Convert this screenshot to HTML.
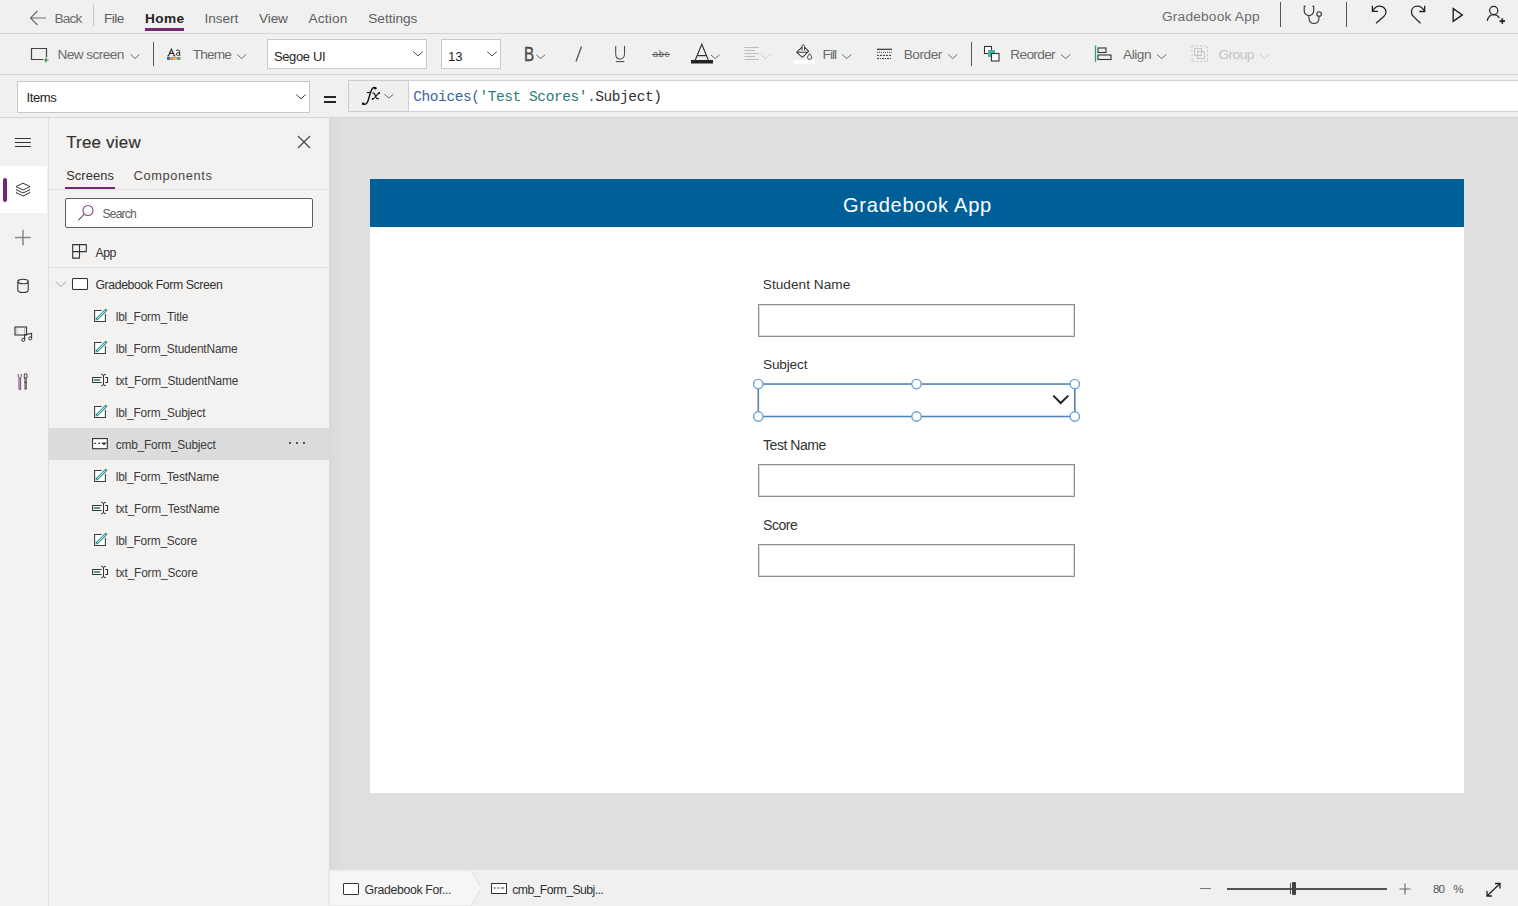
<!DOCTYPE html>
<html><head><meta charset="utf-8"><title>Power Apps</title>
<style>
html,body{margin:0;padding:0;}
body{width:1518px;height:906px;overflow:hidden;position:relative;background:#f0f0f0;font-family:"Liberation Sans",sans-serif;}
.t{position:absolute;white-space:nowrap;line-height:1;}
.r{position:absolute;}
svg.r{overflow:visible;}
</style></head><body>
<div class="r" style="left:0px;top:0px;width:1518px;height:117px;background:#f0f0f0;"></div>
<div class="r" style="left:0px;top:33px;width:1518px;height:1px;background:#d4d4d4;"></div>
<div class="r" style="left:0px;top:74px;width:1518px;height:1px;background:#d4d4d4;"></div>
<div class="r" style="left:0px;top:117px;width:1518px;height:1px;background:#d4d4d4;"></div>
<svg class="r" style="left:29px;top:10px;" width="18" height="16" viewBox="0 0 18 16" fill="none"><path d="M8.5 1 L1.5 8 L8.5 15 M1.5 8 H17" stroke="#6e6e6e" stroke-width="1.2"/></svg>
<div class="t" style="left:54.60px;top:11.87px;font-size:13.66px;letter-spacing:-0.900px;color:#6b6b6b;font-weight:400;font-family:'Liberation Sans', sans-serif;">Back</div>
<div class="r" style="left:93px;top:4px;width:1px;height:22px;background:#c8c8c8;"></div>
<div class="t" style="left:104.00px;top:11.87px;font-size:13.66px;letter-spacing:-0.537px;color:#5e5e5e;font-weight:400;font-family:'Liberation Sans', sans-serif;">File</div>
<div class="t" style="left:145.00px;top:11.87px;font-size:13.66px;letter-spacing:0.348px;color:#252423;font-weight:700;font-family:'Liberation Sans', sans-serif;">Home</div>
<div class="r" style="left:145px;top:28px;width:39px;height:3px;background:#742774;"></div>
<div class="t" style="left:204.50px;top:11.87px;font-size:13.66px;letter-spacing:-0.094px;color:#5e5e5e;font-weight:400;font-family:'Liberation Sans', sans-serif;">Insert</div>
<div class="t" style="left:259.00px;top:11.87px;font-size:13.66px;letter-spacing:-0.134px;color:#5e5e5e;font-weight:400;font-family:'Liberation Sans', sans-serif;">View</div>
<div class="t" style="left:308.60px;top:11.87px;font-size:13.66px;letter-spacing:0.146px;color:#5e5e5e;font-weight:400;font-family:'Liberation Sans', sans-serif;">Action</div>
<div class="t" style="left:368.30px;top:11.87px;font-size:13.66px;letter-spacing:-0.038px;color:#5e5e5e;font-weight:400;font-family:'Liberation Sans', sans-serif;">Settings</div>
<div class="t" style="left:1162.00px;top:9.97px;font-size:13.66px;letter-spacing:0.220px;color:#6b6b6b;font-weight:400;font-family:'Liberation Sans', sans-serif;">Gradebook App</div>
<div class="r" style="left:1280px;top:2px;width:1px;height:25px;background:#555;"></div>
<div class="r" style="left:1346px;top:2px;width:1px;height:25px;background:#555;"></div>
<svg class="r" style="left:1300px;top:0px;" width="26" height="30" viewBox="0 0 26 30" fill="none"><path d="M5.8 6.3 H4.2 V10.8 A4.75 4.75 0 0 0 13.7 10.8 V6.3 H12.2" stroke="#333" stroke-width="1.1" fill="none"/><path d="M8.95 15.55 V18.5 A5 5 0 0 0 18.95 18.5 V16.4" stroke="#333" stroke-width="1.1" fill="none"/><circle cx="19.1" cy="14" r="2.3" stroke="#333" stroke-width="1.1" fill="none"/></svg>
<svg class="r" style="left:1365px;top:0px;" width="28" height="30" viewBox="0 0 28 30" fill="none"><path d="M7.4 5.8 V11.3 H13" stroke="#222" stroke-width="1.3" fill="none"/><path d="M7.8 10.8 C9.5 7.8 12 6.2 14.5 6.2 C18.5 6.2 21 9 21 12 C21 14 20 15.3 19 16.3 L11 23.3" stroke="#222" stroke-width="1.2" fill="none"/></svg>
<svg class="r" style="left:1405px;top:0px;" width="28" height="30" viewBox="0 0 28 30" fill="none"><path d="M19.7 5.8 V11.5 H14.3" stroke="#222" stroke-width="1.3" fill="none"/><path d="M19.2 10.8 C17.5 7.8 15 6.2 12.5 6.2 C8.5 6.2 6.5 9 6.5 12 C6.5 14 7.3 15.3 8.3 16.3 L15.5 23.3" stroke="#222" stroke-width="1.2" fill="none"/></svg>
<svg class="r" style="left:1445px;top:0px;" width="24" height="30" viewBox="0 0 24 30" fill="none"><path d="M8.2 8.6 L17.3 14.9 L8.2 21.3 Z" stroke="#222" stroke-width="1.4" fill="none" stroke-linejoin="miter"/></svg>
<svg class="r" style="left:1480px;top:0px;" width="30" height="30" viewBox="0 0 30 30" fill="none"><circle cx="13.7" cy="10.5" r="4.1" stroke="#222" stroke-width="1.2" fill="none"/><path d="M7.3 20.8 C8 17 10.5 14.6 13.7 14.6 C16 14.6 18 15.8 19.3 18" stroke="#222" stroke-width="1.2" fill="none"/><path d="M22.3 18.3 V23.8 M19.5 21.1 H25" stroke="#222" stroke-width="1.7"/></svg>
<svg class="r" style="left:30px;top:47px;" width="20" height="16" viewBox="0 0 20 16" fill="none"><path d="M13 12.5 H1.5 V1.5 H16.5 V10" stroke="#444" stroke-width="1.2" fill="none"/><path d="M16 10.5 V15.5 M13.5 13 H18.5" stroke="#2e8b3a" stroke-width="1.2"/></svg>
<div class="t" style="left:57.60px;top:47.87px;font-size:13.66px;letter-spacing:-0.604px;color:#6b6b6b;font-weight:400;font-family:'Liberation Sans', sans-serif;">New screen</div>
<svg class="r" style="left:129px;top:53px;" width="12" height="7" viewBox="0 0 12 7" fill="none"><g transform="translate(0.7 0.2)"><path d="M1 1.3 L5.35 5.3 L9.7 1.3" stroke="#6b6b6b" stroke-width="1" fill="none"/></g></svg>
<div class="r" style="left:153px;top:42px;width:1px;height:24px;background:#555;"></div>
<svg class="r" style="left:166px;top:46px;" width="16" height="16" viewBox="0 0 16 16" fill="none"><path d="M2.4 9.7 L5.4 3 L8.4 9.7 M3.6 7.4 H7.2" stroke="#2b2b2b" stroke-width="1.1" fill="none"/><path d="M1.3 9.9 H3.6 M7.2 9.9 H9.5" stroke="#2b2b2b" stroke-width="0.9"/><path d="M10.2 4.6 C10.8 3.7 13.6 3.6 13.6 5.3 V9.3 H14.5 M13.6 6.7 C11.6 6.4 10.3 7 10.3 8.2 C10.3 9.7 12.6 9.8 13.6 8.3" stroke="#2b2b2b" stroke-width="1" fill="none"/><rect x="1" y="11" width="3.2" height="3" fill="#3a72a8"/><rect x="4.4" y="11" width="3.2" height="3" fill="#d9884a"/><rect x="7.8" y="11" width="3.2" height="3" fill="#e8a76a"/><rect x="11.2" y="11" width="3.2" height="3" fill="#5f9c80"/></svg>
<div class="t" style="left:192.80px;top:47.87px;font-size:13.66px;letter-spacing:-0.855px;color:#6b6b6b;font-weight:400;font-family:'Liberation Sans', sans-serif;">Theme</div>
<svg class="r" style="left:236px;top:53px;" width="12" height="7" viewBox="0 0 12 7" fill="none"><g transform="translate(0.2 0.2)"><path d="M1 1.3 L5.45 5.3 L9.9 1.3" stroke="#6b6b6b" stroke-width="1" fill="none"/></g></svg>
<div class="r" style="left:267px;top:39px;width:160px;height:30px;background:#fff;border:1px solid #c8c8c8;box-sizing:border-box;"></div>
<div class="t" style="left:273.90px;top:49.51px;font-size:12.98px;letter-spacing:-0.345px;color:#252423;font-weight:400;font-family:'Liberation Sans', sans-serif;">Segoe UI</div>
<svg class="r" style="left:412px;top:50px;" width="12" height="8" viewBox="0 0 12 8" fill="none"><g transform="translate(0.4 0.3)"><path d="M1 1.3 L5.7 5.6000000000000005 L10.4 1.3" stroke="#444" stroke-width="1" fill="none"/></g></svg>
<div class="r" style="left:441px;top:39px;width:60px;height:30px;background:#fff;border:1px solid #c8c8c8;box-sizing:border-box;"></div>
<div class="t" style="left:448.00px;top:49.50px;font-size:13.00px;letter-spacing:0.000px;color:#252423;font-weight:400;font-family:'Liberation Sans', sans-serif;">13</div>
<svg class="r" style="left:486px;top:50px;" width="12" height="8" viewBox="0 0 12 8" fill="none"><g transform="translate(0.3 0.3)"><path d="M1 1.3 L5.75 5.6000000000000005 L10.5 1.3" stroke="#444" stroke-width="1" fill="none"/></g></svg>
<div class="t" style="left:524.00px;top:44.85px;font-size:19.50px;letter-spacing:0.000px;color:#4a4a4a;font-weight:400;font-family:'Liberation Sans', sans-serif;transform:scaleX(0.78);transform-origin:0 0;-webkit-text-stroke:0.35px #4a4a4a;">B</div>
<svg class="r" style="left:535px;top:53px;" width="11" height="7" viewBox="0 0 11 7" fill="none"><g transform="translate(0.2 0.5)"><path d="M1 1.3 L5.4 5.1000000000000005 L9.8 1.3" stroke="#6b6b6b" stroke-width="1" fill="none"/></g></svg>
<svg class="r" style="left:574px;top:46px;" width="10" height="17" viewBox="0 0 10 17" fill="none"><path d="M7.5 0.5 L2 15.5" stroke="#555" stroke-width="1.3"/></svg>
<svg class="r" style="left:611px;top:45px;" width="17" height="18" viewBox="0 0 17 18" fill="none"><g transform="translate(0.8 0)"><path d="M3.9 1 V9 C3.9 12.3 5.6 14 8.3 14 C11 14 12.7 12.3 12.7 9 V1" stroke="#4a4a4a" stroke-width="1.05" fill="none"/><path d="M4 16.6 H12.6" stroke="#4a4a4a" stroke-width="1.05"/></g></svg>
<div class="t" style="left:653.00px;top:49.76px;font-size:8.88px;letter-spacing:0.842px;color:#555;font-weight:400;font-family:'Liberation Sans', sans-serif;font-size:9px;">abc</div>
<div class="r" style="left:652px;top:54px;width:18px;height:1px;background:#555;"></div>
<svg class="r" style="left:690px;top:43px;" width="24" height="22" viewBox="0 0 24 22" fill="none"><path d="M5.3 17 L11.8 1.2 L18.3 17 M7.4 12.6 H16.2" stroke="#333" stroke-width="1.15" fill="none"/><rect x="1" y="17" width="22" height="3.5" fill="#222"/></svg>
<svg class="r" style="left:709px;top:53px;" width="12" height="7" viewBox="0 0 12 7" fill="none"><g transform="translate(0.8 0.5)"><path d="M1 1.3 L5.35 5.1000000000000005 L9.7 1.3" stroke="#6b6b6b" stroke-width="1" fill="none"/></g></svg>
<svg class="r" style="left:744px;top:46px;" width="18" height="15" viewBox="0 0 18 15" fill="none"><path d="M0.5 1.5 H15 M0.5 4.5 H11 M0.5 7.5 H15 M0.5 10.5 H11 M0.5 13.5 H15" stroke="#bdbdbd" stroke-width="1"/></svg>
<svg class="r" style="left:760px;top:53px;" width="11" height="7" viewBox="0 0 11 7" fill="none"><g transform="translate(0.5 0.5)"><path d="M1 1.3 L5.25 5.1000000000000005 L9.5 1.3" stroke="#c8c8c8" stroke-width="1" fill="none"/></g></svg>
<svg class="r" style="left:793px;top:43px;" width="22" height="22" viewBox="0 0 22 22" fill="none"><path d="M9 7.6 V3.4 C9 1.1 11.5 1.1 11.5 3.4 V7.4" stroke="#3b3a39" stroke-width="1" fill="none"/><path d="M3.6 9.3 L9 4.2 M3.6 9.3 H15 M3.6 9.3 L9.4 14.4 L15.6 8.3 L11.5 4.2" stroke="#3b3a39" stroke-width="1.05" fill="none"/><path d="M16.6 10.6 C15.4 12.4 14.5 13.4 14.5 14.5 C14.5 15.7 15.4 16.3 16.6 16.3 C17.8 16.3 18.7 15.7 18.7 14.5 C18.7 13.4 17.8 12.4 16.6 10.6 Z" stroke="#3b3a39" stroke-width="1" fill="none"/><rect x="0" y="17.2" width="22" height="3.5" fill="#fff"/></svg>
<div class="t" style="left:822.60px;top:47.87px;font-size:13.66px;letter-spacing:-1.016px;color:#6b6b6b;font-weight:400;font-family:'Liberation Sans', sans-serif;">Fill</div>
<svg class="r" style="left:841px;top:53px;" width="12" height="7" viewBox="0 0 12 7" fill="none"><g transform="translate(0.2 0.2)"><path d="M1 1.3 L5.6 5.3 L10.2 1.3" stroke="#6b6b6b" stroke-width="1" fill="none"/></g></svg>
<svg class="r" style="left:876px;top:46px;" width="18" height="15" viewBox="0 0 18 15" fill="none"><path d="M1 3.3 H16" stroke="#333" stroke-width="1.2"/><path d="M1 6.3 H16" stroke="#333" stroke-width="0.9" stroke-dasharray="1 1"/><path d="M1 9.4 H16" stroke="#333" stroke-width="1" stroke-dasharray="2 1"/><path d="M1 12.6 H16" stroke="#333" stroke-width="1" stroke-dasharray="2 1 1 1"/></svg>
<div class="t" style="left:903.70px;top:47.87px;font-size:13.66px;letter-spacing:-0.463px;color:#6b6b6b;font-weight:400;font-family:'Liberation Sans', sans-serif;">Border</div>
<svg class="r" style="left:947px;top:53px;" width="12" height="7" viewBox="0 0 12 7" fill="none"><g transform="translate(0.2 0.2)"><path d="M1 1.3 L5.5 5.3 L10 1.3" stroke="#6b6b6b" stroke-width="1" fill="none"/></g></svg>
<div class="r" style="left:971px;top:42px;width:1px;height:24px;background:#555;"></div>
<svg class="r" style="left:983px;top:45px;" width="18" height="18" viewBox="0 0 18 18" fill="none"><rect x="1.5" y="1.5" width="7" height="7" stroke="#333" stroke-width="1.1" fill="#fff"/><rect x="5" y="5" width="7" height="7" fill="#3fb5a8"/><rect x="8.5" y="8.5" width="7.5" height="7.5" stroke="#333" stroke-width="1.1" fill="#fff"/></svg>
<div class="t" style="left:1010.30px;top:47.87px;font-size:13.66px;letter-spacing:-0.661px;color:#6b6b6b;font-weight:400;font-family:'Liberation Sans', sans-serif;">Reorder</div>
<svg class="r" style="left:1060px;top:53px;" width="12" height="7" viewBox="0 0 12 7" fill="none"><g transform="translate(0 0.2)"><path d="M1 1.3 L5.7 5.3 L10.4 1.3" stroke="#6b6b6b" stroke-width="1" fill="none"/></g></svg>
<svg class="r" style="left:1094px;top:45px;" width="19" height="18" viewBox="0 0 19 18" fill="none"><path d="M1.5 0.5 V17" stroke="#2a9d8f" stroke-width="1.3"/><rect x="4" y="3" width="8" height="4.5" stroke="#333" stroke-width="1.1"/><rect x="4" y="10" width="13" height="4.5" stroke="#333" stroke-width="1.1"/></svg>
<div class="t" style="left:1123.00px;top:47.87px;font-size:13.66px;letter-spacing:-0.447px;color:#6b6b6b;font-weight:400;font-family:'Liberation Sans', sans-serif;">Align</div>
<svg class="r" style="left:1156px;top:53px;" width="12" height="7" viewBox="0 0 12 7" fill="none"><g transform="translate(0 0.2)"><path d="M1 1.3 L5.65 5.3 L10.3 1.3" stroke="#6b6b6b" stroke-width="1" fill="none"/></g></svg>
<svg class="r" style="left:1191px;top:45px;" width="18" height="18" viewBox="0 0 18 18" fill="none"><rect x="1" y="1" width="15.5" height="15.5" stroke="#c4c4c4" stroke-width="1" stroke-dasharray="2 2" fill="none"/><rect x="3.5" y="3.5" width="7" height="7" stroke="#c4c4c4" stroke-width="1"/><rect x="6.5" y="6.5" width="7" height="7" stroke="#c4c4c4" stroke-width="1"/></svg>
<div class="t" style="left:1218.40px;top:47.87px;font-size:13.66px;letter-spacing:-0.492px;color:#c2c2c2;font-weight:400;font-family:'Liberation Sans', sans-serif;">Group</div>
<svg class="r" style="left:1259px;top:53px;" width="11" height="7" viewBox="0 0 11 7" fill="none"><g transform="translate(0 0.2)"><path d="M1 1.3 L5.5 5.3 L10 1.3" stroke="#c8c8c8" stroke-width="1" fill="none"/></g></svg>
<div class="r" style="left:17px;top:81px;width:293px;height:32px;background:#fff;border:1px solid #c8c8c8;box-sizing:border-box;"></div>
<div class="t" style="left:26.40px;top:90.94px;font-size:13.12px;letter-spacing:-0.392px;color:#252423;font-weight:400;font-family:'Liberation Sans', sans-serif;">Items</div>
<svg class="r" style="left:295px;top:93px;" width="12" height="8" viewBox="0 0 12 8" fill="none"><g transform="translate(0.3 0.2)"><path d="M1 1.3 L5.7 5.7 L10.4 1.3" stroke="#444" stroke-width="1" fill="none"/></g></svg>
<div class="r" style="left:324px;top:96px;width:12px;height:2px;background:#252423;"></div>
<div class="r" style="left:324px;top:101px;width:12px;height:2px;background:#252423;"></div>
<div class="r" style="left:348px;top:80px;width:61px;height:32px;background:#efefef;border:1px solid #cdcdcd;box-sizing:border-box;"></div>
<svg class="r" style="left:355px;top:80px;" width="30" height="30" viewBox="0 0 30 30" fill="none"><path d="M20.9 8.6 C20.4 7.1 18.6 7 17.3 8.6 C15.9 10.5 15.1 13.5 14.3 16.5 C13.4 20 12.8 22.4 11.5 23.5 C10.4 24.4 9.2 24.5 8.2 24" stroke="#111" stroke-width="1.45" fill="none"/><circle cx="20.4" cy="8.2" r="1.2" fill="#111"/><circle cx="8.1" cy="23.8" r="1.25" fill="#111"/><path d="M11.8 12.5 H15.7" stroke="#111" stroke-width="1.1"/><path d="M17.4 13.3 C18.6 12.6 19.5 13.3 20 14.8 L21.1 17.6 C21.6 19 22.6 19.1 24 18.4" stroke="#111" stroke-width="1.1" fill="none"/><path d="M24.6 12.9 C23.6 13.1 22.6 14.1 21.3 15.6 L19.3 18 C18.6 18.8 17.9 19.2 17.2 18.8" stroke="#111" stroke-width="1.1" fill="none"/><circle cx="17.6" cy="18.9" r="0.9" fill="#111"/><circle cx="24.2" cy="13" r="0.9" fill="#111"/></svg>
<svg class="r" style="left:383px;top:92px;" width="12" height="8" viewBox="0 0 12 8" fill="none"><g transform="translate(0.3 0.9)"><path d="M1 1.3 L5.55 5.1000000000000005 L10.1 1.3" stroke="#666" stroke-width="1" fill="none"/></g></svg>
<div class="r" style="left:408px;top:80px;width:1120px;height:32px;background:#fff;border:1px solid #d0d0d0;box-sizing:border-box;"></div>
<div class="t" style="left:413.30px;top:89.75px;font-size:14.50px;letter-spacing:-0.430px;color:#3d6596;font-weight:400;font-family:'Liberation Mono', monospace;">Choices(<span style="color:#2b7c78">'Test Scores'</span>.<span style="color:#323130">Subject)</span></div>
<div class="r" style="left:0px;top:118px;width:48px;height:788px;background:#f3f2f1;"></div>
<div class="r" style="left:48px;top:118px;width:1px;height:788px;background:#e1dfdd;"></div>
<div class="r" style="left:0px;top:166px;width:47px;height:47px;background:#fff;"></div>
<div class="r" style="left:3px;top:178px;width:4px;height:24px;background:#742774;border:none;box-sizing:border-box;border-radius:2px;"></div>
<svg class="r" style="left:15px;top:136px;" width="16" height="12" viewBox="0 0 16 12" fill="none"><path d="M0 2.5 H15.8 M0 6.5 H15.8 M0 10.5 H15.8" stroke="#333" stroke-width="1"/></svg>
<svg class="r" style="left:14px;top:181px;" width="18" height="18" viewBox="0 0 18 18" fill="none"><path d="M9 2.2 L16 5.6 L9 9 L2 5.6 Z" stroke="#333" stroke-width="1" fill="#fff"/><path d="M2.6 8.2 L2 8.6 L9 12 L16 8.6 L15.4 8.2" stroke="#333" stroke-width="1" fill="none"/><path d="M2.6 11.2 L2 11.6 L9 15 L16 11.6 L15.4 11.2" stroke="#333" stroke-width="1" fill="none"/></svg>
<svg class="r" style="left:14px;top:229px;" width="18" height="18" viewBox="0 0 18 18" fill="none"><path d="M9 0.7 V16.5 M1 8.5 H16.8" stroke="#8a8886" stroke-width="1.5"/></svg>
<svg class="r" style="left:16px;top:278px;" width="14" height="16" viewBox="0 0 14 16" fill="none"><ellipse cx="7" cy="3.5" rx="5.2" ry="2.3" stroke="#333" stroke-width="1.1" fill="none"/><path d="M1.8 3.5 V12.3 C1.8 15.3 12.2 15.3 12.2 12.3 V3.5" stroke="#333" stroke-width="1.1" fill="none"/></svg>
<svg class="r" style="left:14px;top:326px;" width="20" height="16" viewBox="0 0 20 16" fill="none"><rect x="1" y="1" width="11.5" height="8" stroke="#333" stroke-width="1.1" fill="none"/><path d="M3 2.2 V8 M10.5 2.2 V8" stroke="#777" stroke-width="0.9" stroke-dasharray="1 1"/><path d="M10.6 13.6 V8.8 L17.6 7.4 V12.2" stroke="#333" stroke-width="1.1" fill="none"/><circle cx="9.2" cy="13.8" r="1.5" stroke="#333" stroke-width="1" fill="none"/><circle cx="16.2" cy="12.4" r="1.5" stroke="#333" stroke-width="1" fill="none"/></svg>
<svg class="r" style="left:16px;top:372px;" width="14" height="19" viewBox="0 0 14 19" fill="none"><path d="M2.3 2 V4 C2.3 5.2 3 5.8 3.8 5.8 C4.6 5.8 5.3 5.2 5.3 4 V2 M3 5.8 V17.3 H4.6 V5.8" stroke="#742774" stroke-width="0.9" fill="none"/><path d="M8.3 2 H10.9 V6 H8.3 Z M9 6 V17.3 H10.2 V6" stroke="#333" stroke-width="0.9" fill="none"/><path d="M8.4 10.5 H10.8" stroke="#333" stroke-width="0.9"/></svg>
<div class="r" style="left:49px;top:118px;width:280px;height:788px;background:#f3f2f1;"></div>
<div class="t" style="left:66.20px;top:134.63px;font-size:16.94px;letter-spacing:0.206px;color:#323130;font-weight:400;font-family:'Liberation Sans', sans-serif;-webkit-text-stroke:0.15px #323130;">Tree view</div>
<svg class="r" style="left:297px;top:135px;" width="14" height="14" viewBox="0 0 14 14" fill="none"><path d="M1 1 L13 13 M13 1 L1 13" stroke="#444" stroke-width="1.2"/></svg>
<div class="t" style="left:66.20px;top:170.08px;font-size:12.84px;letter-spacing:0.099px;color:#323130;font-weight:400;font-family:'Liberation Sans', sans-serif;">Screens</div>
<div class="r" style="left:65px;top:187px;width:50px;height:2px;background:#742774;"></div>
<div class="t" style="left:133.60px;top:170.08px;font-size:12.84px;letter-spacing:0.609px;color:#484644;font-weight:400;font-family:'Liberation Sans', sans-serif;">Components</div>
<div class="r" style="left:49px;top:189px;width:280px;height:1px;background:#e1dfdd;"></div>
<div class="r" style="left:65px;top:198px;width:248px;height:30px;background:#fff;border:1px solid #605e5c;box-sizing:border-box;border-radius:2px;"></div>
<svg class="r" style="left:77px;top:204px;" width="18" height="18" viewBox="0 0 18 18" fill="none"><circle cx="11" cy="6.5" r="5" stroke="#7a4a7a" stroke-width="1.1"/><path d="M7.3 10.2 L1.2 16.3" stroke="#7a4a7a" stroke-width="1.2"/></svg>
<div class="t" style="left:102.50px;top:207.62px;font-size:12.16px;letter-spacing:-0.845px;color:#605e5c;font-weight:400;font-family:'Liberation Sans', sans-serif;">Search</div>
<svg class="r" style="left:70px;top:242px;" width="19" height="19" viewBox="0 0 19 19" fill="none"><path d="M2.7 2.6 H16.3 V9.6 H9.5 V16.1 H2.7 Z M2.7 9.6 H9.5 V2.6" stroke="#333" stroke-width="1.1" fill="none"/></svg>
<div class="t" style="left:95.40px;top:247.35px;font-size:12.30px;letter-spacing:-0.438px;color:#323130;font-weight:400;font-family:'Liberation Sans', sans-serif;">App</div>
<div class="r" style="left:49px;top:267px;width:280px;height:1px;background:#e1dfdd;"></div>
<svg class="r" style="left:55px;top:280px;" width="12" height="8" viewBox="0 0 12 8" fill="none"><path d="M1.1 1.7 L6 6.7 L10.9 1.7" stroke="#a0a0a0" stroke-width="1" fill="none"/></svg>
<div class="r" style="left:72px;top:278px;width:16px;height:12px;background:#fff;border:1px solid #333;box-sizing:border-box;border-radius:1px;"></div>
<div class="t" style="left:95.40px;top:279.05px;font-size:12.30px;letter-spacing:-0.396px;color:#323130;font-weight:400;font-family:'Liberation Sans', sans-serif;">Gradebook Form Screen</div>
<div class="r" style="left:49px;top:428px;width:280px;height:32px;background:#dcdcdc;"></div>
<svg class="r" style="left:92px;top:308px;" width="16" height="16" viewBox="0 0 16 16" fill="none"><path d="M9.8 2.4 H2.6 V13.5 H13.4 V6" stroke="#3b3a39" stroke-width="1.05" fill="#fff"/><path d="M4.9 11.1 L13.9 2.2" stroke="#2f9d94" stroke-width="2.7" stroke-linecap="round"/><path d="M5.5 10.5 L13.3 2.8" stroke="#fff" stroke-width="0.8"/><path d="M4.2 11.8 L5 10.3 L5.8 11 Z" fill="#2f9d94"/></svg>
<div class="t" style="left:115.70px;top:311.96px;font-size:11.89px;letter-spacing:-0.160px;color:#3b3a39;font-weight:400;font-family:'Liberation Sans', sans-serif;">lbl_Form_Title</div>
<svg class="r" style="left:92px;top:340px;" width="16" height="16" viewBox="0 0 16 16" fill="none"><path d="M9.8 2.4 H2.6 V13.5 H13.4 V6" stroke="#3b3a39" stroke-width="1.05" fill="#fff"/><path d="M4.9 11.1 L13.9 2.2" stroke="#2f9d94" stroke-width="2.7" stroke-linecap="round"/><path d="M5.5 10.5 L13.3 2.8" stroke="#fff" stroke-width="0.8"/><path d="M4.2 11.8 L5 10.3 L5.8 11 Z" fill="#2f9d94"/></svg>
<div class="t" style="left:115.70px;top:343.96px;font-size:11.89px;letter-spacing:-0.183px;color:#3b3a39;font-weight:400;font-family:'Liberation Sans', sans-serif;">lbl_Form_StudentName</div>
<svg class="r" style="left:90px;top:372px;" width="20" height="16" viewBox="0 0 20 16" fill="none"><path d="M11.7 5.5 H2.6 V10.5 H11.7" stroke="#333" stroke-width="1.05" fill="#fff"/><path d="M4.3 8 H9.7" stroke="#1f7a6e" stroke-width="1.6" stroke-linecap="round"/><path d="M11.2 2.3 Q13.5 2.3 13.5 4 V12 Q13.5 13.7 11.2 13.7 M15.8 2.3 Q13.5 2.3 13.5 4 M15.8 13.7 Q13.5 13.7 13.5 12" stroke="#333" stroke-width="1" fill="none"/><path d="M15.3 5.5 H17.5 V10.5 H15.3" stroke="#333" stroke-width="1.05" fill="none"/></svg>
<div class="t" style="left:115.70px;top:375.96px;font-size:11.89px;letter-spacing:-0.184px;color:#3b3a39;font-weight:400;font-family:'Liberation Sans', sans-serif;">txt_Form_StudentName</div>
<svg class="r" style="left:92px;top:404px;" width="16" height="16" viewBox="0 0 16 16" fill="none"><path d="M9.8 2.4 H2.6 V13.5 H13.4 V6" stroke="#3b3a39" stroke-width="1.05" fill="#fff"/><path d="M4.9 11.1 L13.9 2.2" stroke="#2f9d94" stroke-width="2.7" stroke-linecap="round"/><path d="M5.5 10.5 L13.3 2.8" stroke="#fff" stroke-width="0.8"/><path d="M4.2 11.8 L5 10.3 L5.8 11 Z" fill="#2f9d94"/></svg>
<div class="t" style="left:115.70px;top:407.96px;font-size:11.89px;letter-spacing:-0.171px;color:#3b3a39;font-weight:400;font-family:'Liberation Sans', sans-serif;">lbl_Form_Subject</div>
<svg class="r" style="left:91px;top:436px;" width="18" height="16" viewBox="0 0 18 16" fill="none"><rect x="1.6" y="2.6" width="14.7" height="10.1" stroke="#333" stroke-width="1.1" fill="#fff"/><path d="M3.2 7.4 H4.9 M7.2 7.4 H9 M11.3 7.1 H14.6 L13 8.6 Z" stroke="#333" stroke-width="1.1" fill="#333"/></svg>
<div class="t" style="left:115.70px;top:439.96px;font-size:11.89px;letter-spacing:-0.191px;color:#3b3a39;font-weight:400;font-family:'Liberation Sans', sans-serif;">cmb_Form_Subject</div>
<svg class="r" style="left:92px;top:468px;" width="16" height="16" viewBox="0 0 16 16" fill="none"><path d="M9.8 2.4 H2.6 V13.5 H13.4 V6" stroke="#3b3a39" stroke-width="1.05" fill="#fff"/><path d="M4.9 11.1 L13.9 2.2" stroke="#2f9d94" stroke-width="2.7" stroke-linecap="round"/><path d="M5.5 10.5 L13.3 2.8" stroke="#fff" stroke-width="0.8"/><path d="M4.2 11.8 L5 10.3 L5.8 11 Z" fill="#2f9d94"/></svg>
<div class="t" style="left:115.70px;top:471.96px;font-size:11.89px;letter-spacing:-0.184px;color:#3b3a39;font-weight:400;font-family:'Liberation Sans', sans-serif;">lbl_Form_TestName</div>
<svg class="r" style="left:90px;top:500px;" width="20" height="16" viewBox="0 0 20 16" fill="none"><path d="M11.7 5.5 H2.6 V10.5 H11.7" stroke="#333" stroke-width="1.05" fill="#fff"/><path d="M4.3 8 H9.7" stroke="#1f7a6e" stroke-width="1.6" stroke-linecap="round"/><path d="M11.2 2.3 Q13.5 2.3 13.5 4 V12 Q13.5 13.7 11.2 13.7 M15.8 2.3 Q13.5 2.3 13.5 4 M15.8 13.7 Q13.5 13.7 13.5 12" stroke="#333" stroke-width="1" fill="none"/><path d="M15.3 5.5 H17.5 V10.5 H15.3" stroke="#333" stroke-width="1.05" fill="none"/></svg>
<div class="t" style="left:115.70px;top:503.96px;font-size:11.89px;letter-spacing:-0.185px;color:#3b3a39;font-weight:400;font-family:'Liberation Sans', sans-serif;">txt_Form_TestName</div>
<svg class="r" style="left:92px;top:532px;" width="16" height="16" viewBox="0 0 16 16" fill="none"><path d="M9.8 2.4 H2.6 V13.5 H13.4 V6" stroke="#3b3a39" stroke-width="1.05" fill="#fff"/><path d="M4.9 11.1 L13.9 2.2" stroke="#2f9d94" stroke-width="2.7" stroke-linecap="round"/><path d="M5.5 10.5 L13.3 2.8" stroke="#fff" stroke-width="0.8"/><path d="M4.2 11.8 L5 10.3 L5.8 11 Z" fill="#2f9d94"/></svg>
<div class="t" style="left:115.70px;top:535.96px;font-size:11.89px;letter-spacing:-0.179px;color:#3b3a39;font-weight:400;font-family:'Liberation Sans', sans-serif;">lbl_Form_Score</div>
<svg class="r" style="left:90px;top:564px;" width="20" height="16" viewBox="0 0 20 16" fill="none"><path d="M11.7 5.5 H2.6 V10.5 H11.7" stroke="#333" stroke-width="1.05" fill="#fff"/><path d="M4.3 8 H9.7" stroke="#1f7a6e" stroke-width="1.6" stroke-linecap="round"/><path d="M11.2 2.3 Q13.5 2.3 13.5 4 V12 Q13.5 13.7 11.2 13.7 M15.8 2.3 Q13.5 2.3 13.5 4 M15.8 13.7 Q13.5 13.7 13.5 12" stroke="#333" stroke-width="1" fill="none"/><path d="M15.3 5.5 H17.5 V10.5 H15.3" stroke="#333" stroke-width="1.05" fill="none"/></svg>
<div class="t" style="left:115.70px;top:567.96px;font-size:11.89px;letter-spacing:-0.180px;color:#3b3a39;font-weight:400;font-family:'Liberation Sans', sans-serif;">txt_Form_Score</div>
<svg class="r" style="left:288px;top:441px;" width="18" height="4" viewBox="0 0 18 4" fill="none"><circle cx="2" cy="2" r="1.1" fill="#333"/><circle cx="9" cy="2" r="1.1" fill="#333"/><circle cx="16" cy="2" r="1.1" fill="#333"/></svg>
<div class="r" style="left:329px;top:118px;width:1189px;height:751px;background:#dfdfdf;"></div>
<div class="r" style="left:329px;top:118px;width:16px;height:751px;background:linear-gradient(to right,#d7d7d7 0px,#dbdbdb 4px,#dfdfdf 16px);"></div>
<div class="r" style="left:370px;top:179px;width:1094px;height:614px;background:#fff;"></div>
<div class="r" style="left:370px;top:179px;width:1094px;height:48px;background:#005f96;"></div>
<div class="t" style="left:843.00px;top:194.56px;font-size:20.08px;letter-spacing:0.726px;color:#fff;font-weight:400;font-family:'Liberation Sans', sans-serif;">Gradebook App</div>
<div class="t" style="left:762.80px;top:278.47px;font-size:13.66px;letter-spacing:0.014px;color:#333333;font-weight:400;font-family:'Liberation Sans', sans-serif;">Student Name</div>
<div class="r" style="left:758px;top:304px;width:317px;height:33px;background:#fff;border:1px solid #8f8f8f;box-sizing:border-box;box-shadow:inset 0 0 0 1px #dcdcdc;"></div>
<div class="t" style="left:763.00px;top:358.47px;font-size:13.66px;letter-spacing:-0.178px;color:#333333;font-weight:400;font-family:'Liberation Sans', sans-serif;">Subject</div>
<svg class="r" style="left:750px;top:376px;" width="335" height="50" viewBox="0 0 335 50" fill="none"><rect x="8.3" y="8.05" width="316.5" height="32.45" stroke="#5582b0" stroke-width="1.6" fill="#fff"/><path d="M303.3 19.6 L310.7 27 L318.3 19.6" stroke="#222" stroke-width="2" fill="none"/><circle cx="8.3" cy="8.05" r="4.7" stroke="#6aa0d6" stroke-width="1.4" fill="#fff"/><circle cx="8.3" cy="40.5" r="4.7" stroke="#6aa0d6" stroke-width="1.4" fill="#fff"/><circle cx="166.5" cy="8.05" r="4.7" stroke="#6aa0d6" stroke-width="1.4" fill="#fff"/><circle cx="166.5" cy="40.5" r="4.7" stroke="#6aa0d6" stroke-width="1.4" fill="#fff"/><circle cx="324.8" cy="8.05" r="4.7" stroke="#6aa0d6" stroke-width="1.4" fill="#fff"/><circle cx="324.8" cy="40.5" r="4.7" stroke="#6aa0d6" stroke-width="1.4" fill="#fff"/></svg>
<div class="t" style="left:763.00px;top:437.80px;font-size:14.00px;letter-spacing:-0.450px;color:#333333;font-weight:400;font-family:'Liberation Sans', sans-serif;">Test Name</div>
<div class="r" style="left:758px;top:464px;width:317px;height:33px;background:#fff;border:1px solid #8f8f8f;box-sizing:border-box;box-shadow:inset 0 0 0 1px #dcdcdc;"></div>
<div class="t" style="left:763.00px;top:517.80px;font-size:14.00px;letter-spacing:-0.450px;color:#333333;font-weight:400;font-family:'Liberation Sans', sans-serif;">Score</div>
<div class="r" style="left:758px;top:544px;width:317px;height:33px;background:#fff;border:1px solid #8f8f8f;box-sizing:border-box;box-shadow:inset 0 0 0 1px #dcdcdc;"></div>
<div class="r" style="left:329px;top:869px;width:1189px;height:37px;background:#f0f0f0;"></div>
<div class="r" style="left:329px;top:869px;width:1189px;height:1px;background:#e4e4e4;"></div>
<svg class="r" style="left:329px;top:870px;" width="155" height="36" viewBox="0 0 155 36" fill="none"><path d="M0 0 H142 L152 18 L142 36 H0 Z" fill="#f6f6f6" stroke="#e0e0e0" stroke-width="1"/></svg>
<div class="r" style="left:343px;top:883px;width:16px;height:12px;background:#fff;border:1px solid #333;box-sizing:border-box;border-radius:1px;"></div>
<div class="t" style="left:364.60px;top:883.55px;font-size:12.30px;letter-spacing:-0.358px;color:#323130;font-weight:400;font-family:'Liberation Sans', sans-serif;">Gradebook For...</div>
<svg class="r" style="left:490px;top:882px;" width="18" height="13" viewBox="0 0 18 13" fill="none"><rect x="1.5" y="1.5" width="15" height="10" stroke="#333" stroke-width="1" fill="#fff"/><path d="M3.6 6 H5.6 M7.4 6 H9.4 M11.2 6 H14.2" stroke="#333" stroke-width="1.1"/></svg>
<div class="t" style="left:512.20px;top:883.55px;font-size:12.30px;letter-spacing:-0.597px;color:#323130;font-weight:400;font-family:'Liberation Sans', sans-serif;">cmb_Form_Subj...</div>
<div class="r" style="left:1200px;top:888px;width:11px;height:1px;background:#777;"></div>
<div class="r" style="left:1227px;top:888px;width:160px;height:2px;background:#555;"></div>
<div class="r" style="left:1290px;top:883px;width:1px;height:11px;background:#555;"></div>
<div class="r" style="left:1292px;top:882px;width:4px;height:13px;background:#444;border:none;box-sizing:border-box;border-radius:1px;"></div>
<svg class="r" style="left:1399px;top:883px;" width="13" height="13" viewBox="0 0 13 13" fill="none"><path d="M6 0.5 V11.5 M0.5 6 H11.5" stroke="#666" stroke-width="1.1"/></svg>
<div class="t" style="left:1433.00px;top:882.99px;font-size:11.61px;letter-spacing:-0.914px;color:#555;font-weight:400;font-family:'Liberation Sans', sans-serif;">80</div>
<div class="t" style="left:1453.20px;top:882.99px;font-size:11.61px;letter-spacing:0.000px;color:#555;font-weight:400;font-family:'Liberation Sans', sans-serif;">%</div>
<svg class="r" style="left:1485px;top:882px;" width="17" height="16" viewBox="0 0 17 16" fill="none"><path d="M2 14 L15 1.5 M2 9 V14 H7 M10 1.5 H15 V6.5" stroke="#222" stroke-width="1.3" fill="none"/></svg>
</body></html>
